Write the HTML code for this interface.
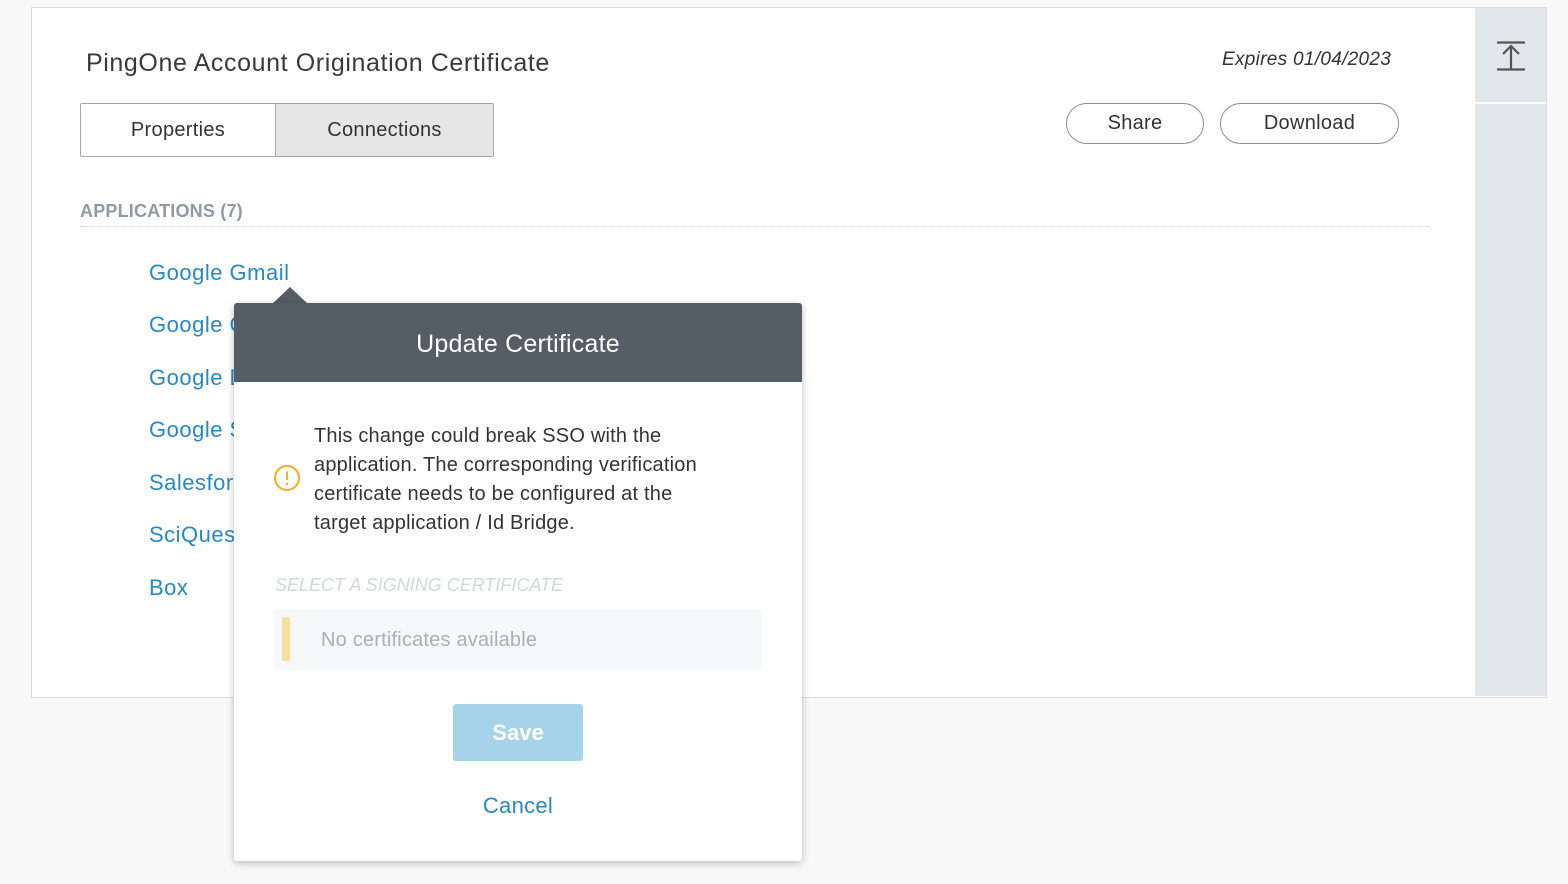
<!DOCTYPE html>
<html><head><meta charset="utf-8"><style>
*{box-sizing:border-box;margin:0;padding:0}
body{width:1568px;height:884px;background:#f8f8f8;font-family:"Liberation Sans",sans-serif;position:relative;overflow:hidden;color:#333}
.card{position:absolute;left:31px;top:7px;width:1516px;height:691px;background:#fff;border:1px solid #dcdcdc}
.side{position:absolute;left:1475px;top:8px;width:71px;height:688px;background:#e1e7eb}
.side .top{height:96px;border-bottom:2px solid #fff}
.abs{position:absolute}
.title{left:86px;top:49px;font-size:25px;color:#3a3a3a;letter-spacing:.6px}
.exp{left:1222px;top:49px;font-size:19px;font-style:italic;color:#333;letter-spacing:.3px}
.tabs{left:80px;top:103px;width:414px;height:54px;border:1px solid #a6a6a6;border-radius:2px;display:flex;font-size:20px;letter-spacing:.3px}
.tabs div{display:flex;align-items:center;justify-content:center}
.btn{height:41px;border:1px solid #8e8e8e;border-radius:21px;font-size:20px;display:flex;align-items:center;justify-content:center;color:#333;letter-spacing:.3px}
.apps{left:80px;top:201px;font-size:18px;color:#8f9aa3;font-weight:bold;letter-spacing:.2px}
.hr{left:80px;top:226px;width:1348px;border-top:1px dotted #ccc}
.link{left:149px;font-size:22px;color:#2689c6;letter-spacing:.5px}
.modal{left:234px;top:303px;width:568px;height:558px;background:#fff;border-radius:3px;box-shadow:0 2px 8px rgba(0,0,0,.25)}
.mh{height:79px;background:#565e65;border-radius:3px 3px 0 0;color:#fff;font-size:25px;display:flex;align-items:center;justify-content:center;padding-top:4px;letter-spacing:.2px}
.arrow{left:272px;top:287px;width:0;height:0;border-left:18px solid transparent;border-right:18px solid transparent;border-bottom:17px solid #565e65}
</style></head><body>
<div class="card"></div>
<div class="side"><div class="top"></div></div>
<svg class="abs" style="left:1495px;top:40px" width="32" height="32" viewBox="0 0 32 32"><path d="M2 2.5H30M2 29.5H30M16 29.5V6M8 14L16 6L24 14" stroke="#555" stroke-width="2.2" fill="none"/></svg>
<div class="abs title">PingOne Account Origination Certificate</div>
<div class="abs exp">Expires 01/04/2023</div>
<div class="abs tabs"><div style="width:195px;border-right:1px solid #a6a6a6">Properties</div><div style="flex:1;background:#e6e6e6">Connections</div></div>
<div class="abs btn" style="left:1066px;top:103px;width:138px">Share</div>
<div class="abs btn" style="left:1220px;top:103px;width:179px">Download</div>
<div class="abs apps">APPLICATIONS (7)</div>
<div class="abs hr"></div>
<div class="abs link" style="top:260px">Google Gmail</div>
<div class="abs link" style="top:312px">Google G</div>
<div class="abs link" style="top:365px">Google D</div>
<div class="abs link" style="top:417px">Google S</div>
<div class="abs link" style="top:470px">Salesforce</div>
<div class="abs link" style="top:522px">SciQuest</div>
<div class="abs link" style="top:575px">Box</div>
<div class="abs arrow"></div>
<div class="abs modal">
 <div class="mh">Update Certificate</div>
 <svg class="abs" style="left:39px;top:161px" width="28" height="28" viewBox="0 0 28 28"><circle cx="14" cy="14" r="12" stroke="#f0b429" stroke-width="2.2" fill="none"/><path d="M14 7.5V16" stroke="#f0b429" stroke-width="2"/><circle cx="14" cy="20" r="1.3" fill="#f0b429"/></svg>
 <div class="abs" style="left:80px;top:119px;font-size:20px;line-height:29px;color:#333;width:415px;letter-spacing:.2px">This change could break SSO with the application. The corresponding verification certificate needs to be configured at the target application / Id Bridge.</div>
 <div class="abs" style="left:41px;top:272px;font-size:18px;font-style:italic;color:#d4d7da;letter-spacing:0px">SELECT A SIGNING CERTIFICATE</div>
 <div class="abs" style="left:40px;top:306px;width:488px;height:61px;background:#f7f8f9;border-radius:3px"></div>
 <div class="abs" style="left:48px;top:314px;width:8px;height:44px;background:#f7e09a;border-radius:2px"></div>
 <div class="abs" style="left:87px;top:326px;font-size:20px;color:#a9b0b7;letter-spacing:.2px">No certificates available</div>
 <div class="abs" style="left:219px;top:401px;width:130px;height:57px;background:#a7d3ea;border-radius:3px;color:#fff;font-size:22px;font-weight:bold;display:flex;align-items:center;justify-content:center">Save</div>
 <div class="abs" style="left:0;width:568px;top:490px;text-align:center;font-size:22px;color:#2689c6;letter-spacing:.3px">Cancel</div>
</div>
</body></html>
